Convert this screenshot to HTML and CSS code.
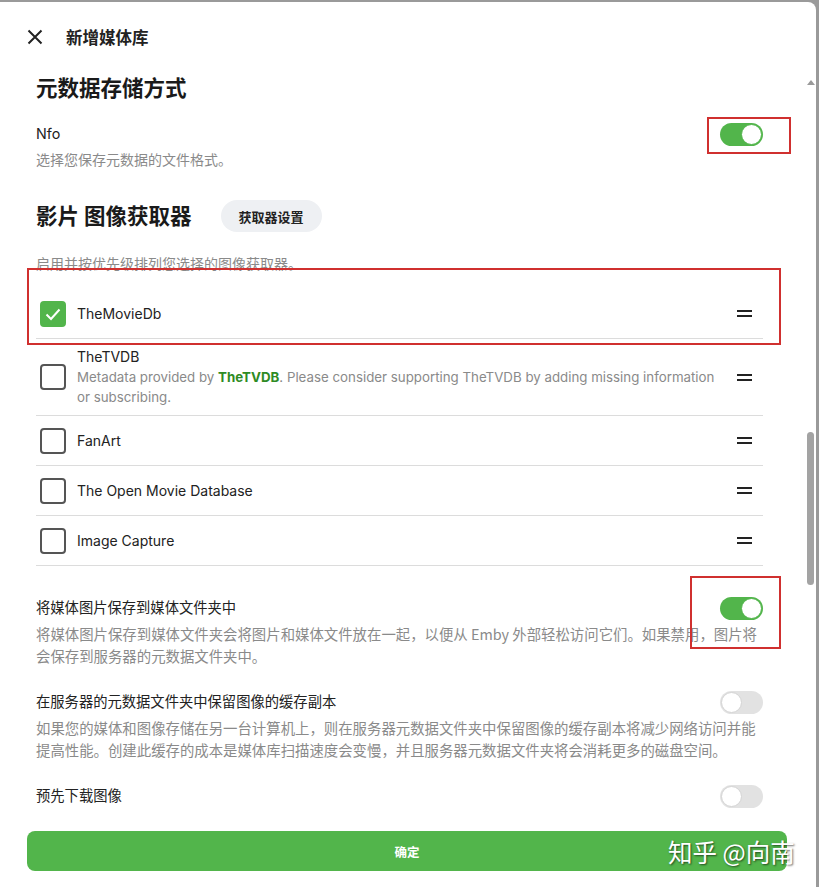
FILE: index.html
```html
<!DOCTYPE html>
<html lang="zh-CN">

<head>
    <meta charset="UTF-8">
    <meta name="viewport" content="width=device-width, initial-scale=1.0">
    <title>新增媒体库</title>
    <link rel="stylesheet" href="styles.css">
</head>

<body>
    <div class="dialog">
        <div class="header">
            <svg class="close" width="16" height="16" viewBox="0 0 16 16">
                <path d="M1.5 1.5 L14.5 14.5 M14.5 1.5 L1.5 14.5" stroke="#222" stroke-width="2" fill="none"/>
            </svg>
            <div class="title">新增媒体库</div>
        </div>

        <div class="body">
            <div class="content">
                <h2 class="section">元数据存储方式</h2>

                <div class="setting first">
                    <div class="setting-row">
                        <div class="label">Nfo</div>
                        <div class="toggle on"><span class="knob"></span></div>
                    </div>
                    <div class="hint">选择您保存元数据的文件格式。</div>
                </div>

                <div class="section-row">
                    <h2 class="section">影片 图像获取器</h2>
                    <button class="pill">获取器设置</button>
                </div>
                <div class="hint list-hint">启用并按优先级排列您选择的图像获取器。</div>

                <div class="fetchers">
                    <div class="fetcher">
                        <span class="check checked">
                            <svg width="18" height="18" viewBox="0 0 18 18">
                                <path d="M2.5 9.5 L7 14 L15.5 4.5" stroke="#fff" stroke-width="2" fill="none"/>
                            </svg>
                        </span>
                        <div class="fetcher-text">
                            <div class="name">TheMovieDb</div>
                        </div>
                        <span class="handle"></span>
                    </div>
                    <div class="fetcher">
                        <span class="check"></span>
                        <div class="fetcher-text">
                            <div class="name">TheTVDB</div>
                            <div class="note">Metadata provided by <b>TheTVDB</b>. Please consider supporting TheTVDB by adding missing information or subscribing.</div>
                        </div>
                        <span class="handle"></span>
                    </div>
                    <div class="fetcher">
                        <span class="check"></span>
                        <div class="fetcher-text">
                            <div class="name">FanArt</div>
                        </div>
                        <span class="handle"></span>
                    </div>
                    <div class="fetcher">
                        <span class="check"></span>
                        <div class="fetcher-text">
                            <div class="name">The Open Movie Database</div>
                        </div>
                        <span class="handle"></span>
                    </div>
                    <div class="fetcher">
                        <span class="check"></span>
                        <div class="fetcher-text">
                            <div class="name">Image Capture</div>
                        </div>
                        <span class="handle"></span>
                    </div>
                </div>

                <div class="setting after-list">
                    <div class="setting-row">
                        <div class="label">将媒体图片保存到媒体文件夹中</div>
                        <div class="toggle on"><span class="knob"></span></div>
                    </div>
                    <div class="desc">将媒体图片保存到媒体文件夹会将图片和媒体文件放在一起，以便从 Emby 外部轻松访问它们。如果禁用，图片将会保存到服务器的元数据文件夹中。</div>
                </div>

                <div class="setting">
                    <div class="setting-row">
                        <div class="label">在服务器的元数据文件夹中保留图像的缓存副本</div>
                        <div class="toggle"><span class="knob"></span></div>
                    </div>
                    <div class="desc">如果您的媒体和图像存储在另一台计算机上，则在服务器元数据文件夹中保留图像的缓存副本将减少网络访问并能提高性能。创建此缓存的成本是媒体库扫描速度会变慢，并且服务器元数据文件夹将会消耗更多的磁盘空间。</div>
                </div>

                <div class="setting">
                    <div class="setting-row">
                        <div class="label">预先下载图像</div>
                        <div class="toggle"><span class="knob"></span></div>
                    </div>
                </div>
            </div>

            <div class="scrollbar">
                <span class="arrow"></span>
                <span class="thumb"></span>
            </div>
        </div>

        <div class="footer">
            <button class="confirm">确定</button>
        </div>

        <!-- annotation boxes drawn over the screenshot -->
        <div class="mark mark-nfo"></div>
        <div class="mark mark-tmdb"></div>
        <div class="mark mark-save"></div>

        <div class="watermark">知乎 @向南</div>
    </div>
</body>

</html>
```

FILE: styles.css
```css
body {
    margin: 0;
    padding: 0;
    background-color: #9a9a9a;
    font-family: Inter, "Noto Sans CJK SC", sans-serif;
    color: #222;
}

.dialog {
    position: relative;
    width: 816px;
    height: 885px;
    margin-top: 2px;
    background-color: #fff;
    border-top-right-radius: 8px;
    display: flex;
    flex-direction: column;
    overflow: hidden;
}

.dialog::before {
    content: "";
    position: absolute;
    top: -2px;
    left: 448px;
    width: 70px;
    height: 2px;
    background-color: #333;
}

.header {
    height: 70px;
    display: flex;
    align-items: center;
    padding-left: 27px;
    flex-shrink: 0;
}

.close {
    display: block;
}

.title {
    margin-left: 23px;
    font-size: 16.5px;
    font-weight: 600;
    color: #222;
}

.body {
    flex: 1;
    display: flex;
    min-height: 0;
}

.content {
    flex: 1;
    padding: 1px 42px 0 36px;
    overflow: hidden;
}

.section {
    margin: 0;
    font-size: 21.5px;
    line-height: 30px;
    font-weight: 700;
    color: #1a1a1a;
}

.setting {
    margin-top: 25px;
}

.setting.first {
    margin-top: 21px;
}

.setting.after-list {
    margin-top: 32px;
}

.setting-row {
    display: flex;
    align-items: center;
    justify-content: space-between;
    height: 20px;
}

.label {
    font-size: 14.3px;
    line-height: 20px;
    color: #222;
}

.hint {
    margin-top: 6px;
    font-size: 14px;
    line-height: 20px;
    color: #8a8a8a;
}

.desc {
    margin-top: 5px;
    font-family: "Noto Sans CJK SC", Inter, sans-serif;
    font-size: 14.4px;
    line-height: 22px;
    color: #8a8a8a;
}

.toggle {
    position: relative;
    width: 43px;
    height: 23px;
    border-radius: 12px;
    background-color: #e2e2e2;
    flex-shrink: 0;
}

.toggle .knob {
    position: absolute;
    top: 1px;
    left: 1px;
    width: 19px;
    height: 19px;
    border-radius: 50%;
    background-color: #fff;
    border: 1px solid #d4d4d4;
}

.toggle.on {
    background-color: #52b54b;
}

.toggle.on .knob {
    left: auto;
    right: 1px;
    border-color: #52b54b;
}

.section-row {
    display: flex;
    align-items: center;
    gap: 29px;
    margin-top: 30px;
}

.pill {
    height: 32px;
    padding: 0 18px;
    border: none;
    border-radius: 16px;
    background-color: #eef0f3;
    font-family: inherit;
    font-size: 13px;
    font-weight: 700;
    color: #222;
}

.list-hint {
    margin-top: 22px;
}

.fetchers {
    margin-top: 15px;
}

.fetcher {
    display: flex;
    align-items: center;
    min-height: 50px;
    box-sizing: border-box;
    padding: 8px 0;
    border-bottom: 1px solid #dcdcdc;
}

.check {
    width: 26px;
    height: 26px;
    margin-left: 4px;
    box-sizing: border-box;
    border: 2px solid #555;
    border-radius: 4px;
    flex-shrink: 0;
    display: flex;
    align-items: center;
    justify-content: center;
}

.check.checked {
    border-color: #52b54b;
    background-color: #52b54b;
}

.fetcher-text {
    flex: 1;
    margin-left: 11px;
    margin-right: 20px;
}

.name {
    font-size: 14px;
    line-height: 20px;
    color: #222;
}

.note {
    font-size: 13.3px;
    line-height: 20px;
    color: #8a8a8a;
}

.note b {
    color: #2e8b24;
    font-weight: 700;
}

.handle {
    width: 15px;
    height: 7px;
    margin-right: 11px;
    box-sizing: border-box;
    border-top: 2px solid #222;
    border-bottom: 2px solid #222;
    flex-shrink: 0;
}

.scrollbar {
    width: 11px;
    display: flex;
    flex-direction: column;
    align-items: center;
}

.arrow {
    margin-top: 8px;
    width: 0;
    height: 0;
    border-left: 4px solid transparent;
    border-right: 4px solid transparent;
    border-bottom: 5px solid #9a9a9a;
}

.thumb {
    margin-top: 347px;
    width: 7px;
    height: 153px;
    border-radius: 4px;
    background-color: #a3a3a3;
}

.footer {
    flex-shrink: 0;
    padding: 11px 29px 16px 27px;
}

.confirm {
    display: block;
    width: 100%;
    height: 40px;
    border: none;
    border-radius: 8px;
    background-color: #52b54b;
    color: #fff;
    font-family: inherit;
    font-size: 12.5px;
    font-weight: 700;
}

.mark {
    position: absolute;
    border: 2px solid #d0302f;
    box-sizing: border-box;
}

.mark-nfo {
    left: 707px;
    top: 115px;
    width: 84px;
    height: 37px;
}

.mark-tmdb {
    left: 27px;
    top: 266px;
    width: 754px;
    height: 77px;
}

.mark-save {
    left: 690px;
    top: 574px;
    width: 91px;
    height: 73px;
}

.watermark {
    position: absolute;
    left: 668px;
    top: 833px;
    font-family: "Noto Sans CJK SC", sans-serif;
    font-size: 24.5px;
    line-height: 34px;
    color: #fff;
    text-shadow: 1px 1px 2px rgba(0, 0, 0, 0.6);
}
```
